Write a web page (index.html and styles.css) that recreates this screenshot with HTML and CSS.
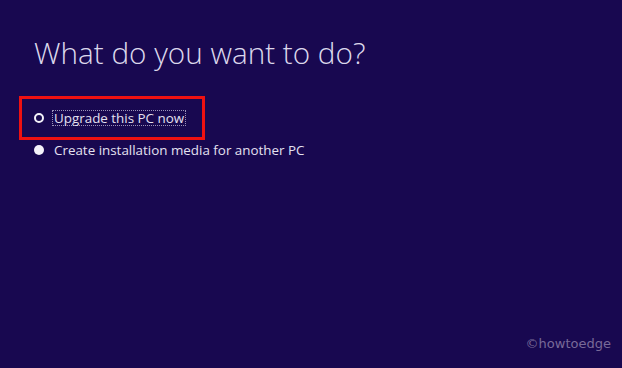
FILE: index.html
```html
<!DOCTYPE html>
<html lang="en">
<head>
	<meta charset="UTF-8">
	<title>What do you want to do?</title>
	<link rel="stylesheet" href="styles.css">
</head>
<body>
	<main class="page">
		<h1 class="title">What do you want to do?</h1>
		<div class="options">
			<label class="option marked">
				<span class="radio checked"></span>
				<span class="text focused">Upgrade this PC now</span>
			</label>
			<label class="option">
				<span class="radio"></span>
				<span class="text">Create installation media for another PC</span>
			</label>
		</div>
		<div class="credit">©howtoedge</div>
	</main>
</body>
</html>
```

FILE: styles.css
```css
html, body {
	margin: 0;
	height: 100%;
}
body {
	background: #180850;
	font-family: "Open Sans", "Noto Sans", sans-serif;
	color: #e4e1f0;
}
.page {
	height: 100%;
	display: flex;
	flex-direction: column;
	box-sizing: border-box;
	padding: 33px 0 0 0;
}
.title {
	margin: 0 0 0 34px;
	font-size: 29.7px;
	font-weight: 300;
	line-height: 40px;
	color: #dcd8ec;
}

/*选项*/
.options {
	margin: 23px 0 0 19px;
	display: flex;
	flex-direction: column;
	align-items: flex-start;
}
.option {
	display: flex;
	align-items: center;
	height: 20px;
	padding-left: 15px;
	font-size: 13.4px;
}
.option.marked {
	box-sizing: border-box;
	width: 186px;
	height: 44px;
	padding-left: 12px;
	border: 3px solid #ee1111;
}
.radio {
	width: 10px;
	height: 10px;
	border-radius: 50%;
	background: #f4f2fa;
	box-sizing: border-box;
	flex: none;
}
.radio.checked {
	background: transparent;
	border: 2px solid #f4f2fa;
}
.text {
	margin-left: 8px;
	padding: 0 1px;
	line-height: 14px;
	border: 1px solid transparent;
}
.text.focused {
	border: 1px dotted #9a92b8;
}

.credit {
	margin: auto 11px 17px auto;
	font-family: "DejaVu Sans", sans-serif;
	font-size: 13px;
	color: #786a98;
}
```
